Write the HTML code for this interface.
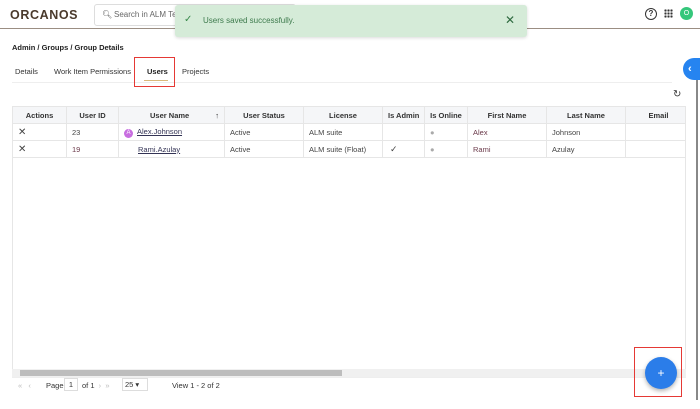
<!DOCTYPE html><html><head><style>
*{box-sizing:border-box;margin:0;padding:0}
body{width:700px;height:409px;overflow:hidden;background:#fff;font-family:"Liberation Sans",sans-serif;font-size:8px;color:#333;position:relative}
.a{position:absolute}
table{border-collapse:collapse;table-layout:fixed}
td,th{height:17px;border:1px solid #e6e6e6;font-size:7.5px;white-space:nowrap;overflow:hidden;padding:0 5px}
th{background:#f5f6f8;font-weight:bold;color:#333;text-align:center}
td{color:#444}
</style></head><body>
<div class="a" style="left:0;top:0;width:700px;height:29px;border-bottom:1px solid #9b8e83;background:#fff"></div>
<div class="a" style="left:10px;top:8px;font-size:12.5px;font-weight:bold;letter-spacing:.6px;color:#4a3a2c">ORCANOS</div>
<div class="a" style="left:94px;top:4px;width:202px;height:22px;border:1px solid #ddd;border-radius:3px;"></div>
<div class="a" style="left:102px;top:10px;font-size:8px;color:#555">&#x1F50D;&#xFE0E;</div>
<div class="a" style="left:114px;top:10px;font-size:8px;color:#666">Search in ALM Ter</div>
<div class="a" style="left:175px;top:5px;width:352px;height:32px;background:#d5ebd8;border-radius:3px;box-shadow:0 1px 3px rgba(0,0,0,.15)"></div>
<div class="a" style="left:184px;top:14px;font-size:10px;color:#3a8a4c">✓</div>
<div class="a" style="left:203px;top:16px;font-size:8px;color:#3d7a4c">Users saved successfully.</div>
<div class="a" style="left:505px;top:13px;font-size:12px;color:#2f6b40">✕</div>
<div class="a" style="left:645px;top:8px;width:12px;height:12px;border:1.3px solid #333;border-radius:50%;font-size:8px;text-align:center;line-height:10px;font-weight:bold">?</div>
<div class="a" style="left:664px;top:9px;width:9px;height:9px;background:radial-gradient(circle,#333 1px,transparent 1.3px) 0 0/3px 3px"></div>
<div class="a" style="left:680px;top:7px;width:13px;height:13px;border-radius:50%;background:#35c77b;color:#fff;font-size:7px;text-align:center;line-height:13px">O</div>
<div class="a" style="left:12px;top:43px;font-size:7.5px;font-weight:bold;color:#222">Admin / Groups / Group Details</div>
<div class="a" style="left:15px;top:67px;font-size:7.5px;color:#333">Details</div>
<div class="a" style="left:54px;top:67px;font-size:7.5px;color:#333">Work Item Permissions</div>
<div class="a" style="left:147px;top:67px;font-size:7.5px;font-weight:bold;color:#222">Users</div>
<div class="a" style="left:182px;top:67px;font-size:7.5px;color:#333">Projects</div>
<div class="a" style="left:144px;top:80px;width:24px;height:1px;background:#d9b97a"></div>
<div class="a" style="left:12px;top:82px;width:660px;height:1px;background:#eee"></div>
<div class="a" style="left:134px;top:57px;width:41px;height:30px;border:1.5px solid #e53935"></div>
<div class="a" style="left:683px;top:58px;width:20px;height:22px;border-radius:11px 0 0 11px;background:#2684f0;color:#fff;font-size:11px;font-weight:bold;line-height:22px;padding-left:5px">‹</div>
<div class="a" style="left:696px;top:80px;width:2px;height:320px;background:#888"></div>
<div class="a" style="left:673px;top:89px;font-size:10px;color:#333">↻</div>
<div class="a" style="left:12px;top:106px;width:674px;height:264px;border:1px solid #e6e6e6;overflow:hidden">
<table style="width:680px;margin-top:-1px;margin-left:-1px">
<tr><th style="width:54px">Actions</th><th style="width:52px">User ID</th><th style="width:106px">User Name <span style="float:right;font-weight:normal">↑</span></th><th style="width:79px">User Status</th><th style="width:79px">License</th><th style="width:42px">Is Admin</th><th style="width:43px">Is Online</th><th style="width:79px">First Name</th><th style="width:79px">Last Name</th><th>Email</th></tr>
<tr><td style="font-size:10px">✕</td><td>23</td><td><span style="display:inline-block;width:9px;height:9px;border-radius:50%;background:#c86ee0;color:#fff;font-size:6px;text-align:center;line-height:9px;margin-right:4px">A</span><u style="color:#335">Alex.Johnson</u></td><td>Active</td><td>ALM suite</td><td></td><td style="color:#aaa">●</td><td style="color:#6b3a4a">Alex</td><td>Johnson</td><td></td></tr>
<tr><td style="font-size:10px">✕</td><td style="color:#6b3a4a">19</td><td style="padding-left:19px"><u style="color:#335">Rami.Azulay</u></td><td>Active</td><td>ALM suite (Float)</td><td style="font-size:9px;padding-left:7px">✓</td><td style="color:#aaa">●</td><td style="color:#6b3a4a">Rami</td><td>Azulay</td><td></td></tr>
</table></div>
<div class="a" style="left:12px;top:369px;width:674px;height:8px;background:#f0f0f0"></div>
<div class="a" style="left:20px;top:370px;width:322px;height:6px;background:#bdbdbd"></div>
<div class="a" style="left:12px;top:377px;width:674px;height:1px;background:#eee"></div>
<div class="a" style="left:18px;top:381px;font-size:7.5px;color:#bbb">«&nbsp;&nbsp; ‹</div>
<div class="a" style="left:46px;top:381px;font-size:7.5px;color:#333">Page</div>
<div class="a" style="left:64px;top:378px;width:14px;height:13px;border:1px solid #ddd;font-size:7.5px;text-align:center;line-height:11px">1</div>
<div class="a" style="left:82px;top:381px;font-size:7.5px;color:#333">of 1 <span style="color:#bbb">&nbsp;› &nbsp;»</span></div>
<div class="a" style="left:122px;top:378px;width:26px;height:13px;border:1px solid #ddd;font-size:7.5px;line-height:11px;padding-left:2px">25 ▾</div>
<div class="a" style="left:172px;top:381px;font-size:7.5px;color:#333">View 1 - 2 of 2</div>
<div class="a" style="left:645px;top:357px;width:32px;height:32px;border-radius:50%;background:#2b7de9;box-shadow:0 2px 4px rgba(0,0,0,.3);color:#fff;font-size:12px;text-align:center;line-height:32px">+</div>
<div class="a" style="left:634px;top:347px;width:48px;height:50px;border:1.5px solid #e53935"></div>
</body></html>
